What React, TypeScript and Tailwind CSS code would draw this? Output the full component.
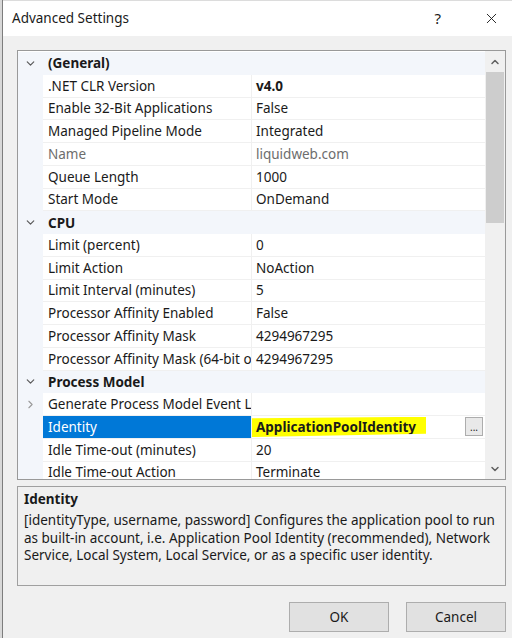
import { ChevronDown, ChevronRight, ChevronUp, X } from 'lucide-react';

type Row =
  | { kind: 'cat'; label: string }
  | { kind: 'prop'; name: string; value: string; bold?: boolean; dim?: boolean; expand?: boolean; selected?: boolean };

const rows: Row[] = [
  { kind: 'cat', label: '(General)' },
  { kind: 'prop', name: '.NET CLR Version', value: 'v4.0', bold: true },
  { kind: 'prop', name: 'Enable 32-Bit Applications', value: 'False' },
  { kind: 'prop', name: 'Managed Pipeline Mode', value: 'Integrated' },
  { kind: 'prop', name: 'Name', value: 'liquidweb.com', dim: true },
  { kind: 'prop', name: 'Queue Length', value: '1000' },
  { kind: 'prop', name: 'Start Mode', value: 'OnDemand' },
  { kind: 'cat', label: 'CPU' },
  { kind: 'prop', name: 'Limit (percent)', value: '0' },
  { kind: 'prop', name: 'Limit Action', value: 'NoAction' },
  { kind: 'prop', name: 'Limit Interval (minutes)', value: '5' },
  { kind: 'prop', name: 'Processor Affinity Enabled', value: 'False' },
  { kind: 'prop', name: 'Processor Affinity Mask', value: '4294967295' },
  { kind: 'prop', name: 'Processor Affinity Mask (64-bit option)', value: '4294967295' },
  { kind: 'cat', label: 'Process Model' },
  { kind: 'prop', name: 'Generate Process Model Event Log Entry', value: '', expand: true },
  { kind: 'prop', name: 'Identity', value: 'ApplicationPoolIdentity', selected: true },
  { kind: 'prop', name: 'Idle Time-out (minutes)', value: '20' },
  { kind: 'prop', name: 'Idle Time-out Action', value: 'Terminate' },
];

function GridRow({ row }: { row: Row }) {
  if (row.kind === 'cat') {
    return (
      <div className="flex h-[22.75px] shrink-0 items-center bg-[#f3f6fb]">
        <div className="flex w-[25px] shrink-0 justify-center">
          <ChevronDown className="h-[13px] w-[13px] text-[#5a5a5a]" strokeWidth={2.2} />
        </div>
        <span className="pl-[5px] font-bold text-[#1a1a1a]">{row.label}</span>
      </div>
    );
  }
  return (
    <div className="flex h-[22.75px] shrink-0 bg-[#f3f6fb]">
      <div className="flex w-[25px] shrink-0 items-center justify-center">
        {row.expand && <ChevronRight className="h-[13px] w-[13px] text-[#9a9a9a]" strokeWidth={2} />}
      </div>
      <div
        className={`flex w-[208px] shrink-0 items-center overflow-hidden whitespace-nowrap border-b border-[#f0f0f0] pl-[5px] ${
          row.selected ? 'bg-[#0078d7] text-white' : row.dim ? 'bg-white text-[#6d6d6d]' : 'bg-white text-[#1a1a1a]'
        }`}
      >
        {row.name}
      </div>
      <div className="relative flex flex-1 items-center overflow-hidden whitespace-nowrap border-b border-l border-[#f0f0f0] bg-white pl-[4px]">
        {row.selected ? (
          <>
            <span className="-ml-[4px] bg-[#ffff00] pl-[4px] pr-[10px] font-bold text-[#1a1a1a] [clip-path:polygon(0_8%,100%_0,100%_84%,0_100%)]">
              {row.value}
            </span>
            <span className="absolute right-[2px] top-[1px] flex h-[19px] w-[18px] items-end justify-center border border-[#adadad] bg-[#e9e9e9] pb-[3px] text-[10px] leading-none text-[#1a1a1a]">
              ...
            </span>
          </>
        ) : (
          <span className={row.bold ? 'font-bold text-[#1a1a1a]' : row.dim ? 'text-[#6d6d6d]' : 'text-[#1a1a1a]'}>
            {row.value}
          </span>
        )}
      </div>
    </div>
  );
}

export default function App() {
  return (
    <div className="flex h-[638px] w-[512px] overflow-hidden bg-[#f0f0f0] font-['Noto_Sans',sans-serif] text-[13.5px]">
      <div className="w-[3px] shrink-0 border-r border-[#7d7d7d] bg-[#d8d8d8]" />
      <div className="flex flex-1 flex-col">
        {/* Title bar */}
        <div className="flex h-[36px] shrink-0 items-center border-t border-[#dcdcdc] bg-white pl-[9px] text-[#1a1a1a]">
          <span className="text-[13.5px]">Advanced Settings</span>
          <span className="ml-auto mr-[42px] text-[15px]">?</span>
          <X className="mr-[12px] h-[17px] w-[17px] text-[#1a1a1a]" strokeWidth={1.3} />
        </div>

        {/* Property grid */}
        <div className="ml-[14px] mr-[6px] mt-[14px] flex h-[430px] shrink-0 border border-[#999999] bg-white">
          <div className="flex flex-1 flex-col overflow-hidden pt-[1px]">
            {rows.map((row, i) => (
              <GridRow key={i} row={row} />
            ))}
          </div>
          <div className="flex w-[20px] shrink-0 flex-col bg-[#f0f0f0]">
            <div className="flex h-[21px] items-center justify-center">
              <ChevronUp className="h-[12px] w-[12px] text-[#606060]" strokeWidth={3} />
            </div>
            <div className="mx-[1px] h-[151px] bg-[#cdcdcd]" />
            <div className="flex-1" />
            <div className="flex h-[21px] items-center justify-center">
              <ChevronDown className="h-[12px] w-[12px] text-[#606060]" strokeWidth={3} />
            </div>
          </div>
        </div>

        {/* Description */}
        <div className="ml-[14px] mr-[6px] mt-[6px] h-[100px] shrink-0 border border-[#a0a0a0] px-[6px] pt-[3px] text-[#1a1a1a]">
          <div className="font-bold leading-[19px]">Identity</div>
          <p className="mt-[3px] leading-[17.5px]">
            [identityType, username, password] Configures the application pool to run as built-in account, i.e.
            Application Pool Identity (recommended), Network Service, Local System, Local Service, or as a specific user
            identity.
          </p>
        </div>

        {/* Buttons */}
        <div className="mr-[6px] mt-[16px] flex justify-end gap-[17px]">
          <button className="h-[30px] w-[100px] border border-[#adadad] bg-[#e1e1e1] text-[#1a1a1a]">OK</button>
          <button className="h-[30px] w-[100px] border border-[#adadad] bg-[#e1e1e1] text-[#1a1a1a]">Cancel</button>
        </div>
      </div>
    </div>
  );
}
